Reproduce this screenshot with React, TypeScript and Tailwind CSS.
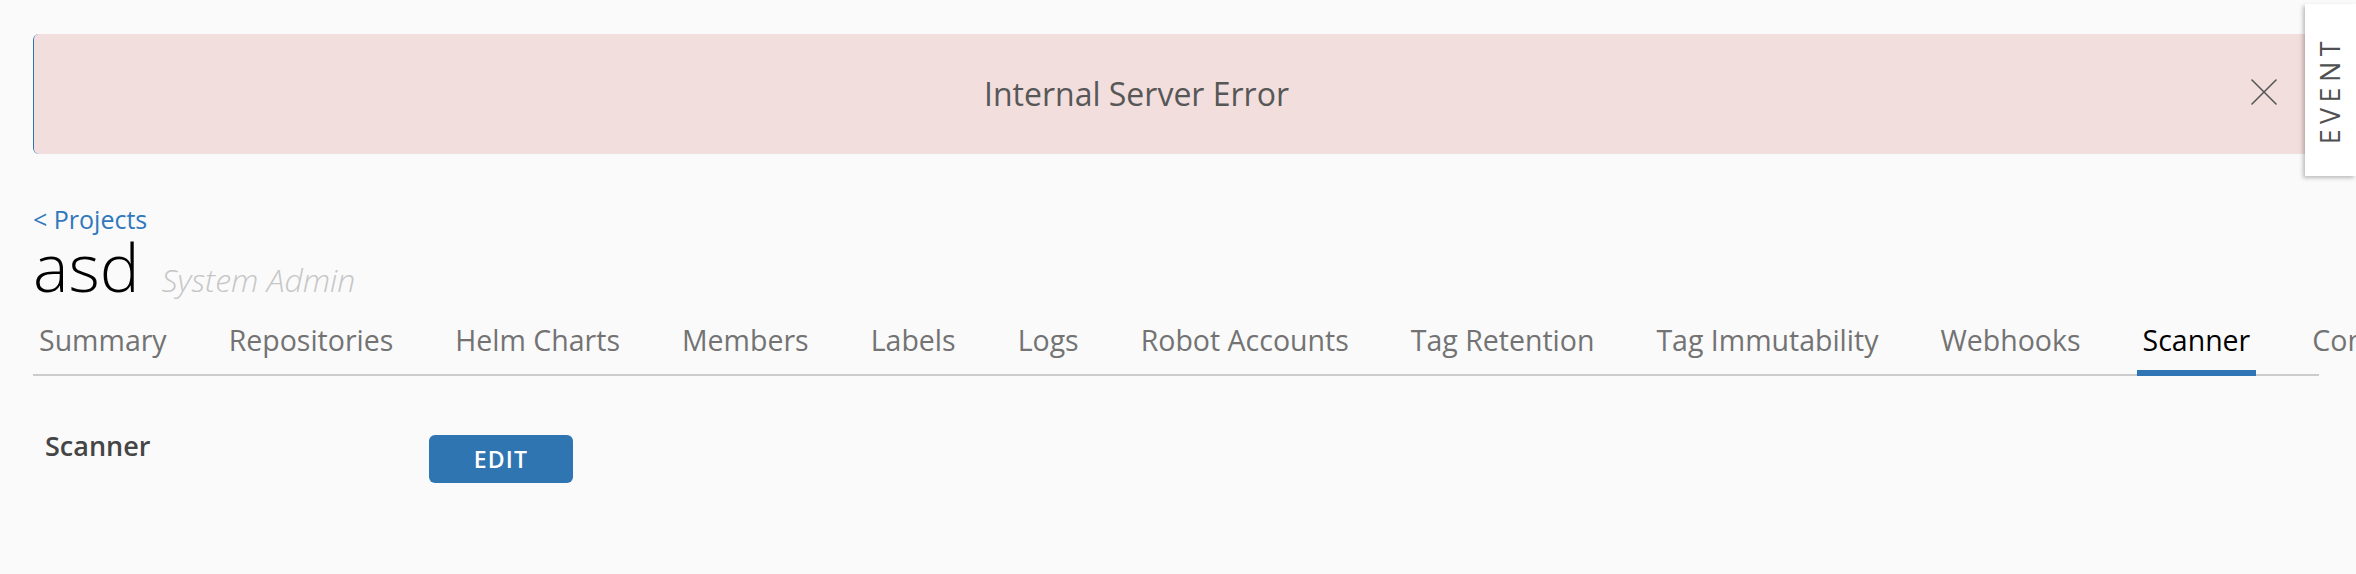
// App.tsx — project detail page with error banner, tab strip and scanner settings.
const TABS = [
  "Summary",
  "Repositories",
  "Helm Charts",
  "Members",
  "Labels",
  "Logs",
  "Robot Accounts",
  "Tag Retention",
  "Tag Immutability",
  "Webhooks",
  "Scanner",
  "Configuration",
];

const ACTIVE = "Scanner";

function CloseIcon() {
  return (
    <svg width="26" height="26" viewBox="0 0 26 26" fill="none" stroke="#575757" strokeWidth="1.6" strokeLinecap="round">
      <path d="M1 1 L25 25" />
      <path d="M25 1 L1 25" />
    </svg>
  );
}

export default function App() {
  return (
    <div className="relative h-[574px] w-full overflow-hidden bg-[#fafafa] font-['Open_Sans',sans-serif]">
      <div className="pl-[33px] pr-[37px] pt-[34px]">
        {/* error banner */}
        <div className="rounded-l-[6px] bg-[#2f74b4]">
          <div className="relative ml-[1px] flex h-[120px] items-center justify-center rounded-l-[5px] bg-[#f1dedd] pr-[80px]">
            <span className="text-[32px] text-[#575757]">Internal Server Error</span>
            <button className="absolute right-[42px] top-[45px]">
              <CloseIcon />
            </button>
          </div>
        </div>

        {/* title block */}
        <div className="mt-[50px] text-[25px] leading-[30px] text-[#2f78bc]">&lt; Projects</div>
        <div className="flex items-baseline">
          <h1 className="text-[67px] font-light leading-[64px] text-black">asd</h1>
          <span className="ml-[22px] text-[32px] font-light italic text-[#c6c6c6]">System Admin</span>
        </div>

        {/* tabs */}
        <nav className="mt-[17px] flex gap-[50px] border-b-2 border-[#cccccc]">
          {TABS.map((t) => (
            <div
              key={t}
              className={
                t === ACTIVE
                  ? "-mb-[2px] shrink-0 border-b-[6px] border-[#2f74b4] px-[6px] pb-[11px] text-[28.5px] leading-[38px] text-black"
                  : "-mb-[2px] shrink-0 border-b-[6px] border-transparent px-[6px] pb-[11px] text-[28.5px] leading-[38px] text-[#737373]"
              }
            >
              {t}
            </div>
          ))}
        </nav>

        {/* scanner row */}
        <div className="mt-[59px] flex items-start">
          <div className="w-[396px] pl-[12px] text-[27px] font-semibold leading-[22px] text-[#454545]">Scanner</div>
          <button className="h-[48px] w-[144px] rounded-[6px] bg-[#2f75b1] text-[23px] font-semibold tracking-[0.05em] text-white">
            EDIT
          </button>
        </div>
      </div>

      {/* event side tab */}
      <div className="absolute right-0 top-[4px] flex h-[172px] w-[51px] items-center justify-center bg-white shadow-[-2px_2px_4px_rgba(0,0,0,0.25)]">
        <span className="rotate-180 text-[27px] font-medium tracking-[0.2em] text-[#505050] [writing-mode:vertical-rl]">EVENT</span>
      </div>
    </div>
  );
}
